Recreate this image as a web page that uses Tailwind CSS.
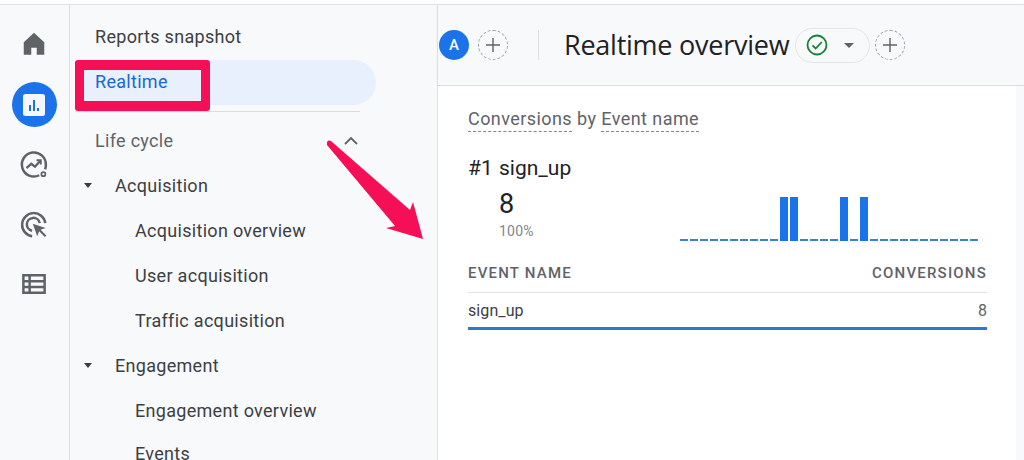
<!DOCTYPE html>
<html>
<head>
<meta charset="utf-8">
<script src="https://cdn.jsdelivr.net/npm/@tailwindcss/browser@4"></script>
</head>
<body class="m-0 bg-white overflow-hidden font-['Roboto',sans-serif]">
<div class="relative w-[1024px] h-[460px] overflow-hidden bg-white">
  <div class="h-[4px] bg-white"></div>
  <div class="flex h-[456px] border-t border-[#dfe1e4] bg-[#f8f9fa]">
    <!-- rail -->
    <div class="w-[70px] shrink-0 border-r border-[#dadce0] flex flex-col items-center pt-[24px] pr-[1px]">
      <svg class="w-[30px] h-[30px]" viewBox="0 0 24 24" fill="#5f6368"><path d="M12 3 3.800 10.500V20.500H9.800v-5.500h4.400v5.500H20.200V10.500z"/></svg>
      <div class="mt-[23px] w-[45px] h-[45px] rounded-full bg-[#1a73e8] flex items-center justify-center">
        <svg class="w-[24px] h-[24px]" viewBox="0 0 24 24"><rect x="1" y="1" width="22" height="22" rx="2.5" fill="#f4f8fe"/><rect x="7" y="12" width="2" height="6" fill="#1a73e8"/><rect x="11" y="7" width="2" height="11" fill="#1a73e8"/><rect x="15" y="15" width="2" height="3" fill="#1a73e8"/></svg>
      </div>
      <svg class="mt-[23px] w-[30px] h-[30px]" viewBox="0 0 24 24" fill="none" stroke="#5f6368" stroke-width="2"><path d="M16.200 20.200A9.600 9.600 0 1 1 21.500 12c0 1.300-.2 2.400-.6 3.500"/><path d="M6 14.500 9.800 11l3 2.400L17 8.600" stroke-width="1.800"/><path d="M14 8.200h3.400v3.400" stroke-width="1.600"/><circle cx="19.500" cy="19.300" r="1.600" stroke-width="1.400"/></svg>
      <svg class="mt-[30px] w-[30px] h-[30px]" viewBox="0 0 24 24" fill="none" stroke="#5f6368" stroke-width="2"><path d="M10.500 21A9.300 9.300 0 1 1 21 10.500"/><path d="M10.500 16.600A5.200 5.200 0 1 1 16.600 10.500"/><path d="M11 11l3.600 10 1.500-4 4.600 4.600 1.200-1.200-4.600-4.600 4-1.500z" fill="#5f6368" stroke="none"/></svg>
      <svg class="mt-[29px] w-[30px] h-[30px]" viewBox="0 0 24 24" fill="none" stroke="#5f6368" stroke-width="2"><rect x="3.500" y="5" width="17" height="14"/><path d="M3.500 9.700h17M3.500 14.300h17M8.500 5v14"/></svg>
    </div>
    <!-- sidebar -->
    <div class="w-[368px] shrink-0 border-r border-[#e3e5e8] text-[18px] text-[#3c4043] tracking-[0.3px]">
      <div class="h-[55px] pl-[25px] pt-[20px] leading-[24px]">Reports snapshot</div>
      <div class="h-[45px] w-[301px] ml-[5px] pl-[20px] pt-[10px] leading-[24px] rounded-r-full bg-[#e8f0fe] text-[#1967d2]">Realtime</div>
      <div class="mt-[6px] ml-[5px] w-[285px] border-t border-[#dadce0]"></div>
      <div class="h-[45px] flex items-center pl-[25px] pr-[78px] mt-[6px] justify-between text-[#5f6368]">
        <span>Life cycle</span>
        <svg class="w-[16px] h-[10px]" viewBox="0 0 16 10" fill="none" stroke="#5f6368" stroke-width="1.8"><path d="M2 8 8 2l6 6"/></svg>
      </div>
      <div class="h-[45px] flex items-center pl-[14px]"><span class="w-0 h-0 border-x-[4.5px] border-x-transparent border-t-[5px] border-t-[#3c4043] mr-[23px]"></span><span>Acquisition</span></div>
      <div class="h-[45px] flex items-center pl-[65px]">Acquisition overview</div>
      <div class="h-[45px] flex items-center pl-[65px]">User acquisition</div>
      <div class="h-[45px] flex items-center pl-[65px]">Traffic acquisition</div>
      <div class="h-[45px] flex items-center pl-[14px]"><span class="w-0 h-0 border-x-[4.5px] border-x-transparent border-t-[5px] border-t-[#3c4043] mr-[23px]"></span><span>Engagement</span></div>
      <div class="h-[45px] flex items-center pl-[65px]">Engagement overview</div>
      <div class="h-[45px] flex items-center pl-[65px] -mt-[2px]">Events</div>
    </div>
    <!-- main -->
    <div class="flex-1 min-w-0 flex flex-col">
      <div class="h-[81px] shrink-0 border-b border-[#dadce0] shadow-[0_1px_2px_rgba(60,64,67,0.12)] flex items-center">
        <div class="flex items-center">
          <div class="ml-[1px] w-[30px] h-[30px] rounded-full bg-[#1a73e8] text-white text-[15px] font-medium flex items-center justify-center">A</div>
          <div class="ml-[9px] w-[30px] h-[30px] rounded-full border border-dashed border-[#9aa0a6] flex items-center justify-center">
            <svg class="w-[16px] h-[16px]" viewBox="0 0 16 16" stroke="#5f6368" stroke-width="1.4"><path d="M8 1v14M1 8h14"/></svg>
          </div>
          <div class="ml-[30px] w-px h-[30px] bg-[#dadce0]"></div>
          <div class="ml-[25px] text-[27px] leading-[32px] text-[#202124] font-['Open_Sans',sans-serif] tracking-[-0.25px]">Realtime overview</div>
          <div class="ml-[6px] w-[75px] h-[35px] rounded-full border border-[#e3e6e8] flex items-center pl-[10px]">
            <svg class="w-[22px] h-[22px]" viewBox="0 0 22 22" fill="none" stroke="#188038" stroke-width="1.8"><circle cx="11" cy="11" r="9.5"/><path d="M6.500 11.300 9.700 14.500 15.800 8"/></svg>
            <span class="ml-[16px] w-0 h-0 border-x-[5px] border-x-transparent border-t-[5px] border-t-[#5f6368]"></span>
          </div>
          <div class="ml-[5px] w-[30px] h-[30px] rounded-full border border-dashed border-[#9aa0a6] flex items-center justify-center">
            <svg class="w-[16px] h-[16px]" viewBox="0 0 16 16" stroke="#5f6368" stroke-width="1.4"><path d="M8 1v14M1 8h14"/></svg>
          </div>
        </div>
      </div>
      <div class="flex-1 flex">
        <div class="w-[578px] bg-white pl-[30px] pr-[29px] pt-[22px] text-[#3c4043]">
          <div class="text-[18px] leading-[22px] text-[#5f6368] tracking-[0.43px]"><span class="border-b border-dashed border-[#80868b] pb-[2px]">Conversions</span> by <span class="border-b border-dashed border-[#80868b] pb-[2px]">Event name</span></div>
          <div class="mt-[25px] text-[21px] leading-[26px] text-[#202124] flex"><span class="w-[31px]">#1</span><span>sign_up</span></div>
          <div class="flex items-start">
            <div class="ml-[31px] w-[36px]">
              <div class="mt-[6px] text-[27px] leading-[34px] text-[#202124]">8</div>
              <div class="mt-[1px] text-[14px] leading-[18px] tracking-[0.2px] text-[#80868b]">100%</div>
            </div>
            <div class="ml-[145px] mt-[16px] h-[44px] flex items-end gap-[2px]">
              <i class="w-[8px] h-[2px] bg-[#3b82d6]"></i><i class="w-[8px] h-[2px] bg-[#3b82d6]"></i><i class="w-[8px] h-[2px] bg-[#3b82d6]"></i><i class="w-[8px] h-[2px] bg-[#3b82d6]"></i><i class="w-[8px] h-[2px] bg-[#3b82d6]"></i><i class="w-[8px] h-[2px] bg-[#3b82d6]"></i><i class="w-[8px] h-[2px] bg-[#3b82d6]"></i><i class="w-[8px] h-[2px] bg-[#3b82d6]"></i><i class="w-[8px] h-[2px] bg-[#3b82d6]"></i><i class="w-[8px] h-[2px] bg-[#3b82d6]"></i>
              <i class="w-[8px] h-[44px] bg-[#1a73e8]"></i><i class="w-[8px] h-[44px] bg-[#1a73e8]"></i>
              <i class="w-[8px] h-[2px] bg-[#3b82d6]"></i><i class="w-[8px] h-[2px] bg-[#3b82d6]"></i><i class="w-[8px] h-[2px] bg-[#3b82d6]"></i><i class="w-[8px] h-[2px] bg-[#3b82d6]"></i>
              <i class="w-[8px] h-[44px] bg-[#1a73e8]"></i>
              <i class="w-[8px] h-[2px] bg-[#3b82d6]"></i>
              <i class="w-[8px] h-[44px] bg-[#1a73e8]"></i>
              <i class="w-[8px] h-[2px] bg-[#3b82d6]"></i><i class="w-[8px] h-[2px] bg-[#3b82d6]"></i><i class="w-[8px] h-[2px] bg-[#3b82d6]"></i><i class="w-[8px] h-[2px] bg-[#3b82d6]"></i><i class="w-[8px] h-[2px] bg-[#3b82d6]"></i><i class="w-[8px] h-[2px] bg-[#3b82d6]"></i><i class="w-[8px] h-[2px] bg-[#3b82d6]"></i><i class="w-[8px] h-[2px] bg-[#3b82d6]"></i><i class="w-[8px] h-[2px] bg-[#3b82d6]"></i><i class="w-[8px] h-[2px] bg-[#3b82d6]"></i><i class="w-[8px] h-[2px] bg-[#3b82d6]"></i>
            </div>
          </div>
          <div class="mt-[22px] h-[30px] flex justify-between items-start border-b border-[#e0e2e5] text-[15px] leading-[20px] font-medium tracking-[1.2px] text-[#5f6368]"><span>EVENT NAME</span><span>CONVERSIONS</span></div>
          <div class="h-[37px] pt-[2px] flex justify-between items-center border-b-[3px] border-[#2a7bd0] text-[16px] tracking-[0.1px] text-[#3c4043]"><span>sign_up</span><span class="text-[#5f6368]">8</span></div>
        </div>
        <div class="flex-1 bg-[#f8f9fa]"></div>
      </div>
    </div>
  </div>
  <!-- annotations -->
  <div class="absolute left-[75px] top-[60px] w-[135px] h-[51px] rounded-[3px] border-x-[9px] border-y-[10px] border-[#f50f57]"></div>
  <svg class="absolute left-[320px] top-[130px] w-[120px] h-[120px]" viewBox="0 0 120 120"><path d="M7 12 Q9 9.500 11.500 11.500 L90 80 L93 72 L103 109 L66 98 L75 96 L7 15 Z" fill="#f50f57"/></svg>
</div>
</body>
</html>
